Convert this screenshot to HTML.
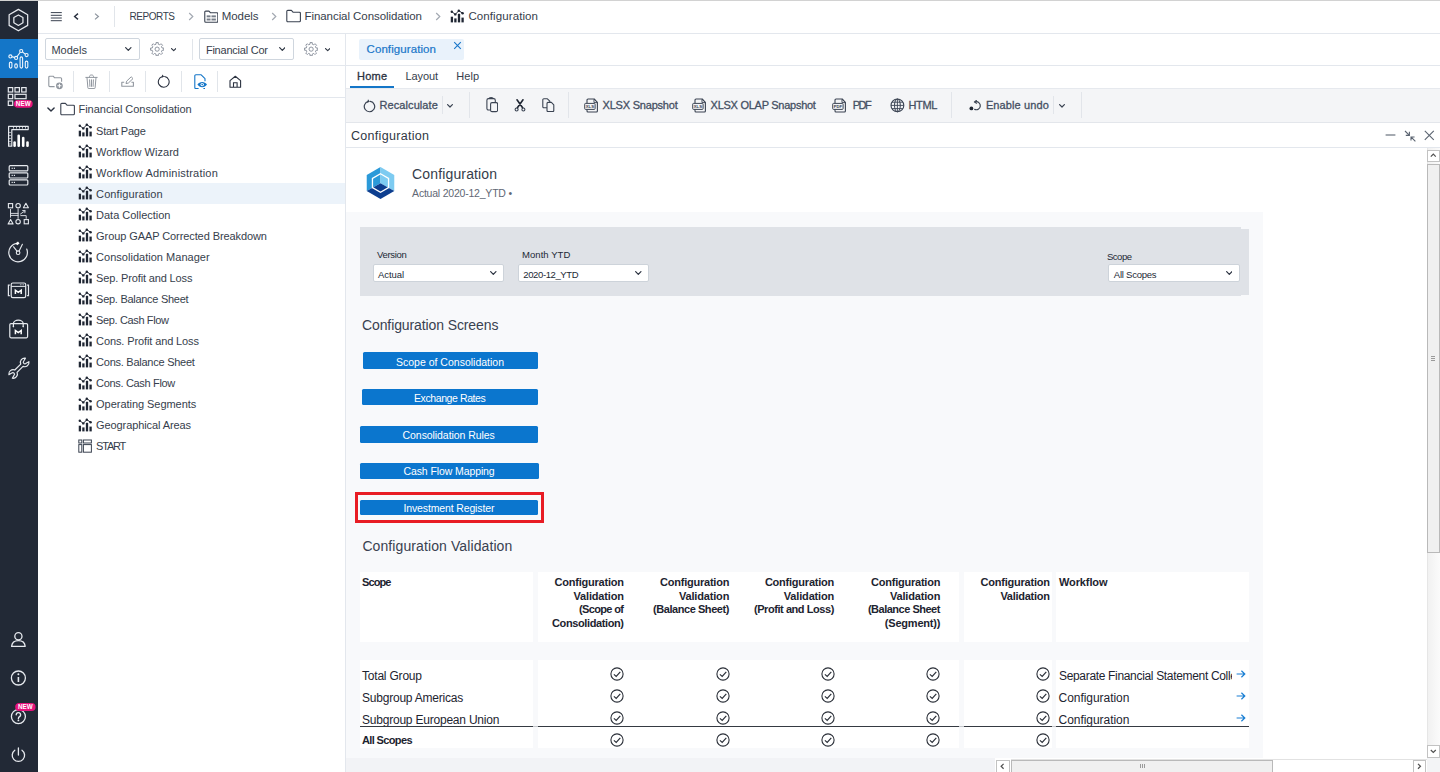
<!DOCTYPE html>
<html lang="en"><head><meta charset="utf-8"><title>Configuration - Financial Consolidation</title>
<style>
html,body{margin:0;padding:0;}
body{width:1440px;height:772px;overflow:hidden;background:#fff;position:relative;
 font-family:"Liberation Sans",sans-serif;}
.b{position:absolute;box-sizing:border-box;display:block;}
.t{position:absolute;white-space:nowrap;display:block;}
</style></head><body>
<div class="b" style="left:0px;top:0px;width:37.9px;height:772px;background:#222936;"></div>
<div class="b" style="left:0px;top:39.1px;width:38px;height:38.7px;background:#1476c8;"></div>
<svg class="b" style="left:0px;top:0px;" width="38" height="772" viewBox="0 0 38 772" fill="none"><polygon points="18.40,9.35 9.13,14.70 9.13,25.40 18.40,30.75 27.67,25.40 27.67,14.70" stroke="#e6e9ee" stroke-width="1.25" stroke-linejoin="round"/><polygon points="18.40,14.95 13.85,17.57 13.85,22.82 18.40,25.45 22.95,22.83 22.95,17.57" stroke="#e6e9ee" stroke-width="1.25" stroke-linejoin="round"/><rect x="9.4" y="62.1" width="2.5" height="6.0" rx="1.25" stroke="#eef5fc" stroke-width="1.1"/><rect x="14.8" y="63.9" width="2.5" height="4.2" rx="1.25" stroke="#eef5fc" stroke-width="1.1"/><rect x="20.1" y="56.9" width="2.5" height="11.2" rx="1.25" stroke="#eef5fc" stroke-width="1.1"/><rect x="25.3" y="61.1" width="2.5" height="7.0" rx="1.25" stroke="#eef5fc" stroke-width="1.1"/><polyline points="10.4,56.4 16.1,57.9 21.2,51.0 26.6,55.1" stroke="#eef5fc" stroke-width="1.1"/><circle cx="10.4" cy="56.4" r="1.55" fill="#1476c8" stroke="#eef5fc" stroke-width="1.1"/><circle cx="16.1" cy="57.9" r="1.55" fill="#1476c8" stroke="#eef5fc" stroke-width="1.1"/><circle cx="21.2" cy="51.0" r="1.55" fill="#1476c8" stroke="#eef5fc" stroke-width="1.1"/><circle cx="26.6" cy="55.1" r="1.55" fill="#1476c8" stroke="#eef5fc" stroke-width="1.1"/><rect x="8.3" y="87.6" width="4.4" height="4.4" stroke="#e6e9ee" stroke-width="1.2"/><rect x="15" y="87.6" width="4.4" height="4.4" stroke="#e6e9ee" stroke-width="1.2"/><rect x="21.7" y="87.6" width="4.4" height="4.4" stroke="#e6e9ee" stroke-width="1.2"/><rect x="8.3" y="94.3" width="4.4" height="4.4" stroke="#e6e9ee" stroke-width="1.2"/><rect x="15" y="94.3" width="11.1" height="4.4" stroke="#e6e9ee" stroke-width="1.2"/><rect x="8.3" y="101" width="4.4" height="4.4" stroke="#e6e9ee" stroke-width="1.2"/><rect x="13.9" y="99.9" width="18.8" height="7.9" rx="3.95" fill="#e6127c"/><text x="23.3" y="105.9" text-anchor="middle" font-family="Liberation Sans, sans-serif" font-size="6.3" font-weight="700" fill="#ffffff" letter-spacing="0.1">NEW</text><path d="M8.6 126.4h19.6v3.2h-16.4v16.6h-3.2z" stroke="#e6e9ee" stroke-width="1.2" stroke-linejoin="round"/><line x1="13.5" y1="127" x2="13.5" y2="128.6" stroke="#e6e9ee" stroke-width="0.8"/><line x1="16.5" y1="127" x2="16.5" y2="128.6" stroke="#e6e9ee" stroke-width="0.8"/><line x1="19.5" y1="127" x2="19.5" y2="128.6" stroke="#e6e9ee" stroke-width="0.8"/><line x1="22.5" y1="127" x2="22.5" y2="128.6" stroke="#e6e9ee" stroke-width="0.8"/><line x1="25.5" y1="127" x2="25.5" y2="128.6" stroke="#e6e9ee" stroke-width="0.8"/><line x1="9.2" y1="132.5" x2="10.8" y2="132.5" stroke="#e6e9ee" stroke-width="0.8"/><line x1="9.2" y1="135.5" x2="10.8" y2="135.5" stroke="#e6e9ee" stroke-width="0.8"/><line x1="9.2" y1="138.5" x2="10.8" y2="138.5" stroke="#e6e9ee" stroke-width="0.8"/><line x1="9.2" y1="141.5" x2="10.8" y2="141.5" stroke="#e6e9ee" stroke-width="0.8"/><line x1="9.2" y1="144" x2="10.8" y2="144" stroke="#e6e9ee" stroke-width="0.8"/><line x1="14.6" y1="142.6" x2="14.6" y2="145.8" stroke="#ffffff" stroke-width="2.6" stroke-linecap="round"/><line x1="18.7" y1="135.8" x2="18.7" y2="145.8" stroke="#ffffff" stroke-width="2.6" stroke-linecap="round"/><line x1="23.2" y1="138" x2="23.2" y2="145.8" stroke="#ffffff" stroke-width="2.6" stroke-linecap="round"/><line x1="27.5" y1="142.6" x2="27.5" y2="145.8" stroke="#ffffff" stroke-width="2.6" stroke-linecap="round"/><rect x="9.2" y="165.7" width="18.6" height="5.2" rx="1" stroke="#e6e9ee" stroke-width="1.2"/><rect x="11.6" y="167.7" width="1.2" height="1.2" fill="#e6e9ee"/><rect x="13.8" y="167.7" width="1.2" height="1.2" fill="#e6e9ee"/><rect x="9.2" y="172.8" width="18.6" height="5.2" rx="1" stroke="#e6e9ee" stroke-width="1.2"/><rect x="11.6" y="174.8" width="1.2" height="1.2" fill="#e6e9ee"/><rect x="13.8" y="174.8" width="1.2" height="1.2" fill="#e6e9ee"/><rect x="9.2" y="179.8" width="18.6" height="5.2" rx="1" stroke="#e6e9ee" stroke-width="1.2"/><rect x="11.6" y="181.8" width="1.2" height="1.2" fill="#e6e9ee"/><rect x="13.8" y="181.8" width="1.2" height="1.2" fill="#e6e9ee"/><rect x="8.4" y="203.6" width="4.2" height="4.2" stroke="#e6e9ee" stroke-width="1.1"/><circle cx="18.1" cy="205.7" r="2.2" stroke="#e6e9ee" stroke-width="1.1"/><path d="M25.9 203.3l2.5 4.5h-5z" stroke="#e6e9ee" stroke-width="1.1" stroke-linejoin="round"/><path d="M10.6 219.4l2.5 4.5h-5z" stroke="#e6e9ee" stroke-width="1.1" stroke-linejoin="round"/><circle cx="18.1" cy="221.7" r="2.2" stroke="#e6e9ee" stroke-width="1.1"/><rect x="24.2" y="219.6" width="4.2" height="4.2" stroke="#e6e9ee" stroke-width="1.1"/><path d="M10.5 209v8.6M18.1 208.8v10M10.5 213.4h8M10.5 215.4h8M20.2 214.2l4.6-3.2M22.2 210.6l3-0.2-0.4 2.8M20.4 215.6h5.8v3.2" stroke="#e6e9ee" stroke-width="0.9"/><path d="M26.72 249.02A9.3 9.3 0 1 1 16.97 243.27" stroke="#e6e9ee" stroke-width="1.2" stroke-linecap="round"/><path d="M15.6 243.4l2.4-1.9 1.5 2-2.3 1.8z" fill="#ffffff"/><circle cx="18.1" cy="252.7" r="1.8" stroke="#e6e9ee" stroke-width="1.1"/><path d="M17 251.2l-3.4-4.4M19.1 251.1l3.3-6.8" stroke="#e6e9ee" stroke-width="1.1" stroke-linecap="round"/><rect x="11.2" y="283" width="14.5" height="14.6" rx="1.6" stroke="#e6e9ee" stroke-width="1.2"/><line x1="11.2" y1="286.4" x2="25.7" y2="286.4" stroke="#e6e9ee" stroke-width="1"/><path d="M9.8 285.2h-1.4v10.4h1.4M27.1 285.2h1.4v10.4h-1.4" stroke="#e6e9ee" stroke-width="1.2"/><path d="M15.4 294v-3.8l2.9 2.1 2.9-2.1v3.8" stroke="#ffffff" stroke-width="1.5" stroke-linejoin="miter"/><circle cx="20.4" cy="284.7" r="0.5" fill="#e6e9ee"/><circle cx="22" cy="284.7" r="0.5" fill="#e6e9ee"/><circle cx="23.6" cy="284.7" r="0.5" fill="#e6e9ee"/><rect x="9.8" y="323.6" width="17.8" height="14.2" rx="1.2" stroke="#e6e9ee" stroke-width="1.2"/><path d="M13.4 326.4v-2.6a4.9 3.6 0 0 1 9.8 0v2.6" stroke="#e6e9ee" stroke-width="1.2"/><circle cx="13.4" cy="326.6" r="0.8" fill="#e6e9ee"/><circle cx="23.2" cy="326.6" r="0.8" fill="#e6e9ee"/><path d="M15.4 334.2v-3.8l2.9 2.1 2.9-2.1v3.8" stroke="#ffffff" stroke-width="1.5"/><g transform="translate(18.9 368.2) rotate(-45)"><path d="M11.72 -2.47A4.3 4.3 0 0 0 4.21 -1.6L-4.21 -1.6A4.3 4.3 0 0 0 -11.72 -2.47L-8.50 -1.6A1.6 1.6 0 0 1 -8.50 1.6L-11.72 2.47A4.3 4.3 0 0 0 -4.21 1.6L4.21 1.6A4.3 4.3 0 0 0 11.72 2.47L8.50 1.6A1.6 1.6 0 0 1 8.50 -1.6Z" stroke="#e6e9ee" stroke-width="1.2" stroke-linejoin="round"/></g><circle cx="18.4" cy="636.2" r="3.6" stroke="#e6e9ee" stroke-width="1.3"/><path d="M11.6 646.4c0.4-4 3.2-5.8 6.8-5.8s6.4 1.8 6.8 5.8z" stroke="#e6e9ee" stroke-width="1.3" stroke-linejoin="round"/><circle cx="18.4" cy="678" r="7" stroke="#e6e9ee" stroke-width="1.3"/><line x1="18.4" y1="677" x2="18.4" y2="682" stroke="#e6e9ee" stroke-width="1.6"/><circle cx="18.4" cy="674.3" r="1" fill="#e6e9ee"/><circle cx="18.4" cy="716.6" r="7" stroke="#e6e9ee" stroke-width="1.3"/><path d="M16.2 714.8a2.2 2.2 0 1 1 3.4 1.9c-0.8 0.5-1.2 0.9-1.2 1.8" stroke="#e6e9ee" stroke-width="1.4" stroke-linecap="round"/><circle cx="18.4" cy="720.4" r="0.9" fill="#e6e9ee"/><rect x="15.2" y="702.9" width="20.4" height="8.2" rx="4.1" fill="#e6127c"/><text x="25.4" y="709.2" text-anchor="middle" font-family="Liberation Sans, sans-serif" font-size="6.3" font-weight="700" fill="#ffffff" letter-spacing="0.1">NEW</text><path d="M22 750.2a6.2 6.2 0 1 1 -7.2 0" stroke="#e6e9ee" stroke-width="1.3" stroke-linecap="round"/><line x1="18.4" y1="748" x2="18.4" y2="755" stroke="#e6e9ee" stroke-width="1.3" stroke-linecap="round"/></svg>
<div class="b" style="left:38px;top:32.5px;width:1402px;height:1px;background:#e3e7ed;"></div>
<svg class="b" style="left:50px;top:11px;" width="13" height="11" viewBox="0 0 13 11" fill="none"><path d="M0.8 1.6h11M0.8 4.3h11M0.8 7h11M0.8 9.7h11" stroke="#3a4250" stroke-width="1"/></svg>
<svg class="b" style="left:73px;top:12px;" width="7" height="9" viewBox="0 0 7 9" fill="none"><polyline points="5,1.6 1.6,4.5 5,7.4" stroke="#2b3240" stroke-width="1.4"/></svg>
<svg class="b" style="left:93px;top:12px;" width="7" height="9" viewBox="0 0 7 9" fill="none"><polyline points="2,1.6 5.4,4.5 2,7.4" stroke="#8d949e" stroke-width="1.2"/></svg>
<div class="b" style="left:114px;top:6px;width:1px;height:21px;background:#e1e5ea;"></div>
<span class="t " style="left:129.50px;top:11.74px;font-size:10px;line-height:10px;color:#363e4c;letter-spacing:-0.443px;">REPORTS</span>
<svg class="b" style="left:187.5px;top:12px;" width="6" height="9" viewBox="0 0 6 9" fill="none"><polyline points="1.2,1 4.8,4.5 1.2,8" stroke="#a3a9b2" stroke-width="1.2"/></svg>
<svg class="b" style="left:203.8px;top:10px;" width="14.4" height="12.5" viewBox="0 0 15 13" fill="none"><path d="M0.8 2.2a1 1 0 0 1 1-1h3.4l1.4 1.6h6.8a1 1 0 0 1 1 1v8a1 1 0 0 1-1 1h-11.6a1 1 0 0 1-1-1z" stroke="#3a4250" stroke-width="1.15" stroke-linejoin="round"/><rect x="2.8" y="5.6" width="4" height="2" fill="#767d88"/><rect x="7.8" y="5.6" width="4.6" height="2" fill="#767d88"/><rect x="2.8" y="8.9" width="4" height="2" fill="#767d88"/><rect x="7.8" y="8.9" width="4.6" height="2" fill="#767d88"/></svg>
<span class="t " style="left:221.80px;top:11.27px;font-size:11.5px;line-height:11.5px;color:#363e4c;letter-spacing:-0.095px;">Models</span>
<svg class="b" style="left:270.5px;top:12px;" width="6" height="9" viewBox="0 0 6 9" fill="none"><polyline points="1.2,1 4.8,4.5 1.2,8" stroke="#a3a9b2" stroke-width="1.2"/></svg>
<svg class="b" style="left:285.6px;top:9.4px;" width="15" height="14" viewBox="0 0 15 14" fill="none"><path d="M0.8 2.4a1 1 0 0 1 1-1h3.6l1.6 1.8h6.4a1 1 0 0 1 1 1v7.6a1 1 0 0 1-1 1h-11.6a1 1 0 0 1-1-1z" stroke="#3a4250" stroke-width="1.1" stroke-linejoin="round"/></svg>
<span class="t " style="left:304.50px;top:11.27px;font-size:11.5px;line-height:11.5px;color:#363e4c;letter-spacing:-0.064px;">Financial Consolidation</span>
<svg class="b" style="left:435px;top:12px;" width="6" height="9" viewBox="0 0 6 9" fill="none"><polyline points="1.2,1 4.8,4.5 1.2,8" stroke="#a3a9b2" stroke-width="1.2"/></svg>
<svg class="b" style="left:450.4px;top:9px;" width="14" height="14" viewBox="0 0 14 14" fill="none"><line x1="1.9" y1="7.7" x2="1.9" y2="13.4" stroke="#1f2633" stroke-width="2.3"/><line x1="5.4" y1="9.4" x2="5.4" y2="13.4" stroke="#1f2633" stroke-width="2.3"/><line x1="9.0" y1="4.8" x2="9.0" y2="13.4" stroke="#1f2633" stroke-width="2.3"/><line x1="12.6" y1="8.6" x2="12.6" y2="13.4" stroke="#1f2633" stroke-width="2.3"/><polyline points="1.8,2.7 5.3,5.4 8.8,1.7 12.6,4.2" stroke="#1f2633" stroke-width="1"/><circle cx="1.8" cy="2.7" r="1.2" fill="#1f2633"/><circle cx="5.3" cy="5.4" r="1.2" fill="#1f2633"/><circle cx="8.8" cy="1.7" r="1.2" fill="#1f2633"/><circle cx="12.6" cy="4.2" r="1.2" fill="#1f2633"/></svg>
<span class="t " style="left:468.40px;top:11.27px;font-size:11.5px;line-height:11.5px;color:#363e4c;letter-spacing:0.099px;">Configuration</span>
<div class="b" style="left:345px;top:33px;width:1px;height:739px;background:#e3e7ed;"></div>
<div class="b" style="left:38px;top:65px;width:308px;height:1px;background:#e3e7ed;"></div>
<div class="b" style="left:38px;top:97px;width:308px;height:1px;background:#e3e7ed;"></div>
<div class="b" style="left:45px;top:38.4px;width:95px;height:21.4px;background:#fff;border:1px solid #cfd6de;border-radius:2px;"></div>
<span class="t " style="left:51.40px;top:44.59px;font-size:11px;line-height:11px;color:#363e4c;letter-spacing:0.028px;">Models</span>
<svg class="b" style="left:125.4px;top:47.2px;" width="6.6" height="4.2" viewBox="0 0 7 4.4" fill="none"><polyline points="0.7,0.7 3.5,3.5 6.3,0.7" stroke="#2f3744" stroke-width="1.3" stroke-linecap="round" stroke-linejoin="round"/></svg>
<svg class="b" style="left:150px;top:41.9px;" width="14.3" height="14.3" viewBox="0 0 15 15" fill="none"><polygon points="6.32,0.60 8.68,0.60 8.68,2.33 10.32,3.01 11.54,1.78 13.22,3.46 11.99,4.68 12.67,6.32 14.40,6.32 14.40,8.68 12.67,8.68 11.99,10.32 13.22,11.54 11.54,13.22 10.32,11.99 8.68,12.67 8.68,14.40 6.32,14.40 6.32,12.67 4.68,11.99 3.46,13.22 1.78,11.54 3.01,10.32 2.33,8.68 0.60,8.68 0.60,6.32 2.33,6.32 3.01,4.68 1.78,3.46 3.46,1.78 4.68,3.01 6.32,2.33" stroke="#8a919c" stroke-width="1" stroke-linejoin="round"/><circle cx="7.5" cy="7.5" r="2.2" stroke="#8a919c" stroke-width="1"/></svg>
<svg class="b" style="left:171px;top:48.4px;" width="5.4" height="3.4" viewBox="0 0 7 4.4" fill="none"><polyline points="0.7,0.7 3.5,3.5 6.3,0.7" stroke="#2f3744" stroke-width="1.5" stroke-linecap="round" stroke-linejoin="round"/></svg>
<div class="b" style="left:192px;top:39px;width:1px;height:21px;background:#e1e5ea;"></div>
<div class="b" style="left:199.4px;top:38.4px;width:94.2px;height:21.4px;background:#fff;border:1px solid #cfd6de;border-radius:2px;"></div>
<span class="t " style="left:205.90px;top:44.59px;font-size:11px;line-height:11px;color:#363e4c;letter-spacing:-0.225px;">Financial Cor</span>
<svg class="b" style="left:278.8px;top:47.2px;" width="6.6" height="4.2" viewBox="0 0 7 4.4" fill="none"><polyline points="0.7,0.7 3.5,3.5 6.3,0.7" stroke="#2f3744" stroke-width="1.3" stroke-linecap="round" stroke-linejoin="round"/></svg>
<svg class="b" style="left:303.6px;top:41.9px;" width="14.3" height="14.3" viewBox="0 0 15 15" fill="none"><polygon points="6.32,0.60 8.68,0.60 8.68,2.33 10.32,3.01 11.54,1.78 13.22,3.46 11.99,4.68 12.67,6.32 14.40,6.32 14.40,8.68 12.67,8.68 11.99,10.32 13.22,11.54 11.54,13.22 10.32,11.99 8.68,12.67 8.68,14.40 6.32,14.40 6.32,12.67 4.68,11.99 3.46,13.22 1.78,11.54 3.01,10.32 2.33,8.68 0.60,8.68 0.60,6.32 2.33,6.32 3.01,4.68 1.78,3.46 3.46,1.78 4.68,3.01 6.32,2.33" stroke="#8a919c" stroke-width="1" stroke-linejoin="round"/><circle cx="7.5" cy="7.5" r="2.2" stroke="#8a919c" stroke-width="1"/></svg>
<svg class="b" style="left:324.8px;top:48.4px;" width="5.4" height="3.4" viewBox="0 0 7 4.4" fill="none"><polyline points="0.7,0.7 3.5,3.5 6.3,0.7" stroke="#2f3744" stroke-width="1.5" stroke-linecap="round" stroke-linejoin="round"/></svg>
<div class="b" style="left:72.9px;top:71px;width:1px;height:21px;background:#e1e5ea;"></div>
<div class="b" style="left:108.9px;top:71px;width:1px;height:21px;background:#e1e5ea;"></div>
<div class="b" style="left:144.8px;top:71px;width:1px;height:21px;background:#e1e5ea;"></div>
<div class="b" style="left:180.8px;top:71px;width:1px;height:21px;background:#e1e5ea;"></div>
<div class="b" style="left:217.1px;top:71px;width:1px;height:21px;background:#e1e5ea;"></div>
<svg class="b" style="left:47.6px;top:74.6px;" width="16" height="15" viewBox="0 0 16 15" fill="none"><path d="M6.6 11.6h-4.8a1 1 0 0 1-1-1v-8.4a1 1 0 0 1 1-1h3.4l1.4 1.6h6a1 1 0 0 1 1 1v3" stroke="#91979f" stroke-width="1.1" stroke-linejoin="round"/><circle cx="11.4" cy="10.8" r="3.4" fill="#91979f"/><path d="M11.4 8.8v4M9.4 10.8h4" stroke="#fff" stroke-width="1.1"/></svg>
<svg class="b" style="left:85px;top:74px;" width="13" height="15.4" viewBox="0 0 13 15.4" fill="none"><path d="M0.8 3.4h11.4M4.4 3.2c0-1.6 0.6-2.2 2.1-2.2s2.1 0.6 2.1 2.2M2 3.6l0.9 10.2a0.8 0.8 0 0 0 0.8 0.8h5.6a0.8 0.8 0 0 0 0.8-0.8l0.9-10.2M4.6 5.8l0.3 6.6M6.5 5.8v6.6M8.4 5.8l-0.3 6.6" stroke="#91979f" stroke-width="1" stroke-linecap="round"/></svg>
<svg class="b" style="left:120.8px;top:76.4px;" width="14" height="11" viewBox="0 0 14 11" fill="none"><path d="M3.2 6.2h-2.4v4h11.6v-4h-2" stroke="#91979f" stroke-width="1.1" stroke-linejoin="round"/><path d="M5 7.6l0.6-2.4 4.6-4.4 1.8 1.8-4.6 4.4z" stroke="#91979f" stroke-width="1" stroke-linejoin="round"/></svg>
<svg class="b" style="left:156.8px;top:73.8px;" width="13.6" height="14.4" viewBox="0 0 13.6 14.4" fill="none"><path d="M7.6 2.5a5.4 5.4 0 1 1 -2 0.05" stroke="#2b3240" stroke-width="1.1" stroke-linecap="round"/><path d="M4.8 0.8l2.4 1.6-2.2 1.8" fill="#2b3240" transform="rotate(20 6 2.4)"/></svg>
<svg class="b" style="left:193.8px;top:73.6px;" width="13.6" height="15.6" viewBox="0 0 13.6 15.6" fill="none"><path d="M4.6 14.6h-2.8a1 1 0 0 1-1-1v-11.8a1 1 0 0 1 1-1h5.4l3.8 3.8v2.6M9.4 14.6h1.6" stroke="#1476c8" stroke-width="1.1" stroke-linejoin="round"/><path d="M3.4 10.6c2-3.4 7.6-3.4 9.6 0c-2 3.4-7.6 3.4-9.6 0z" fill="#1476c8"/><circle cx="8.2" cy="10.6" r="1.7" fill="#fff"/><circle cx="8.2" cy="10.6" r="0.8" fill="#1476c8"/></svg>
<svg class="b" style="left:229.4px;top:75.4px;" width="12.6" height="13" viewBox="0 0 12.6 13" fill="none"><path d="M1 5.6l5.3-4.4 5.3 4.4v6.6h-10.6z" stroke="#2b3240" stroke-width="1.1" stroke-linejoin="round"/><path d="M4.5 12v-4.2h3.6v4.2" stroke="#2b3240" stroke-width="1.1"/></svg>
<div class="b" style="left:38px;top:183px;width:307px;height:21px;background:#ecf3fa;"></div>
<svg class="b" style="left:47px;top:106.6px;" width="8" height="5.2" viewBox="0 0 8 5.2" fill="none"><polyline points="0.9,0.9 4,4 7.1,0.9" stroke="#2b3240" stroke-width="1.4" stroke-linecap="round" stroke-linejoin="round"/></svg>
<svg class="b" style="left:60px;top:102.2px;" width="15" height="14" viewBox="0 0 15 14" fill="none"><path d="M0.8 2.4a1 1 0 0 1 1-1h3.6l1.6 1.8h6.4a1 1 0 0 1 1 1v7.6a1 1 0 0 1-1 1h-11.6a1 1 0 0 1-1-1z" stroke="#3a4250" stroke-width="1.1" stroke-linejoin="round"/></svg>
<span class="t " style="left:78.50px;top:104.49px;font-size:11px;line-height:11px;color:#363e4c;letter-spacing:-0.024px;">Financial Consolidation</span>
<svg class="b" style="left:78px;top:122.8px;" width="14" height="14" viewBox="0 0 14 14" fill="none"><line x1="1.9" y1="7.7" x2="1.9" y2="13.4" stroke="#1f2633" stroke-width="2.3"/><line x1="5.4" y1="9.4" x2="5.4" y2="13.4" stroke="#1f2633" stroke-width="2.3"/><line x1="9.0" y1="4.8" x2="9.0" y2="13.4" stroke="#1f2633" stroke-width="2.3"/><line x1="12.6" y1="8.6" x2="12.6" y2="13.4" stroke="#1f2633" stroke-width="2.3"/><polyline points="1.8,2.7 5.3,5.4 8.8,1.7 12.6,4.2" stroke="#1f2633" stroke-width="1"/><circle cx="1.8" cy="2.7" r="1.2" fill="#1f2633"/><circle cx="5.3" cy="5.4" r="1.2" fill="#1f2633"/><circle cx="8.8" cy="1.7" r="1.2" fill="#1f2633"/><circle cx="12.6" cy="4.2" r="1.2" fill="#1f2633"/></svg>
<span class="t " style="left:96.10px;top:125.55px;font-size:11px;line-height:11px;color:#363e4c;letter-spacing:-0.253px;">Start Page</span>
<svg class="b" style="left:78px;top:143.8px;" width="14" height="14" viewBox="0 0 14 14" fill="none"><line x1="1.9" y1="7.7" x2="1.9" y2="13.4" stroke="#1f2633" stroke-width="2.3"/><line x1="5.4" y1="9.4" x2="5.4" y2="13.4" stroke="#1f2633" stroke-width="2.3"/><line x1="9.0" y1="4.8" x2="9.0" y2="13.4" stroke="#1f2633" stroke-width="2.3"/><line x1="12.6" y1="8.6" x2="12.6" y2="13.4" stroke="#1f2633" stroke-width="2.3"/><polyline points="1.8,2.7 5.3,5.4 8.8,1.7 12.6,4.2" stroke="#1f2633" stroke-width="1"/><circle cx="1.8" cy="2.7" r="1.2" fill="#1f2633"/><circle cx="5.3" cy="5.4" r="1.2" fill="#1f2633"/><circle cx="8.8" cy="1.7" r="1.2" fill="#1f2633"/><circle cx="12.6" cy="4.2" r="1.2" fill="#1f2633"/></svg>
<span class="t " style="left:96.10px;top:146.61px;font-size:11px;line-height:11px;color:#363e4c;letter-spacing:0.042px;">Workflow Wizard</span>
<svg class="b" style="left:78px;top:164.9px;" width="14" height="14" viewBox="0 0 14 14" fill="none"><line x1="1.9" y1="7.7" x2="1.9" y2="13.4" stroke="#1f2633" stroke-width="2.3"/><line x1="5.4" y1="9.4" x2="5.4" y2="13.4" stroke="#1f2633" stroke-width="2.3"/><line x1="9.0" y1="4.8" x2="9.0" y2="13.4" stroke="#1f2633" stroke-width="2.3"/><line x1="12.6" y1="8.6" x2="12.6" y2="13.4" stroke="#1f2633" stroke-width="2.3"/><polyline points="1.8,2.7 5.3,5.4 8.8,1.7 12.6,4.2" stroke="#1f2633" stroke-width="1"/><circle cx="1.8" cy="2.7" r="1.2" fill="#1f2633"/><circle cx="5.3" cy="5.4" r="1.2" fill="#1f2633"/><circle cx="8.8" cy="1.7" r="1.2" fill="#1f2633"/><circle cx="12.6" cy="4.2" r="1.2" fill="#1f2633"/></svg>
<span class="t " style="left:96.10px;top:167.67px;font-size:11px;line-height:11px;color:#363e4c;letter-spacing:0.206px;">Workflow Administration</span>
<svg class="b" style="left:78px;top:185.9px;" width="14" height="14" viewBox="0 0 14 14" fill="none"><line x1="1.9" y1="7.7" x2="1.9" y2="13.4" stroke="#1f2633" stroke-width="2.3"/><line x1="5.4" y1="9.4" x2="5.4" y2="13.4" stroke="#1f2633" stroke-width="2.3"/><line x1="9.0" y1="4.8" x2="9.0" y2="13.4" stroke="#1f2633" stroke-width="2.3"/><line x1="12.6" y1="8.6" x2="12.6" y2="13.4" stroke="#1f2633" stroke-width="2.3"/><polyline points="1.8,2.7 5.3,5.4 8.8,1.7 12.6,4.2" stroke="#1f2633" stroke-width="1"/><circle cx="1.8" cy="2.7" r="1.2" fill="#1f2633"/><circle cx="5.3" cy="5.4" r="1.2" fill="#1f2633"/><circle cx="8.8" cy="1.7" r="1.2" fill="#1f2633"/><circle cx="12.6" cy="4.2" r="1.2" fill="#1f2633"/></svg>
<span class="t " style="left:96.10px;top:188.73px;font-size:11px;line-height:11px;color:#363e4c;letter-spacing:0.097px;">Configuration</span>
<svg class="b" style="left:78px;top:207.0px;" width="14" height="14" viewBox="0 0 14 14" fill="none"><line x1="1.9" y1="7.7" x2="1.9" y2="13.4" stroke="#1f2633" stroke-width="2.3"/><line x1="5.4" y1="9.4" x2="5.4" y2="13.4" stroke="#1f2633" stroke-width="2.3"/><line x1="9.0" y1="4.8" x2="9.0" y2="13.4" stroke="#1f2633" stroke-width="2.3"/><line x1="12.6" y1="8.6" x2="12.6" y2="13.4" stroke="#1f2633" stroke-width="2.3"/><polyline points="1.8,2.7 5.3,5.4 8.8,1.7 12.6,4.2" stroke="#1f2633" stroke-width="1"/><circle cx="1.8" cy="2.7" r="1.2" fill="#1f2633"/><circle cx="5.3" cy="5.4" r="1.2" fill="#1f2633"/><circle cx="8.8" cy="1.7" r="1.2" fill="#1f2633"/><circle cx="12.6" cy="4.2" r="1.2" fill="#1f2633"/></svg>
<span class="t " style="left:96.10px;top:209.79px;font-size:11px;line-height:11px;color:#363e4c;letter-spacing:-0.021px;">Data Collection</span>
<svg class="b" style="left:78px;top:228.1px;" width="14" height="14" viewBox="0 0 14 14" fill="none"><line x1="1.9" y1="7.7" x2="1.9" y2="13.4" stroke="#1f2633" stroke-width="2.3"/><line x1="5.4" y1="9.4" x2="5.4" y2="13.4" stroke="#1f2633" stroke-width="2.3"/><line x1="9.0" y1="4.8" x2="9.0" y2="13.4" stroke="#1f2633" stroke-width="2.3"/><line x1="12.6" y1="8.6" x2="12.6" y2="13.4" stroke="#1f2633" stroke-width="2.3"/><polyline points="1.8,2.7 5.3,5.4 8.8,1.7 12.6,4.2" stroke="#1f2633" stroke-width="1"/><circle cx="1.8" cy="2.7" r="1.2" fill="#1f2633"/><circle cx="5.3" cy="5.4" r="1.2" fill="#1f2633"/><circle cx="8.8" cy="1.7" r="1.2" fill="#1f2633"/><circle cx="12.6" cy="4.2" r="1.2" fill="#1f2633"/></svg>
<span class="t " style="left:96.10px;top:230.85px;font-size:11px;line-height:11px;color:#363e4c;letter-spacing:-0.088px;">Group GAAP Corrected Breakdown</span>
<svg class="b" style="left:78px;top:249.1px;" width="14" height="14" viewBox="0 0 14 14" fill="none"><line x1="1.9" y1="7.7" x2="1.9" y2="13.4" stroke="#1f2633" stroke-width="2.3"/><line x1="5.4" y1="9.4" x2="5.4" y2="13.4" stroke="#1f2633" stroke-width="2.3"/><line x1="9.0" y1="4.8" x2="9.0" y2="13.4" stroke="#1f2633" stroke-width="2.3"/><line x1="12.6" y1="8.6" x2="12.6" y2="13.4" stroke="#1f2633" stroke-width="2.3"/><polyline points="1.8,2.7 5.3,5.4 8.8,1.7 12.6,4.2" stroke="#1f2633" stroke-width="1"/><circle cx="1.8" cy="2.7" r="1.2" fill="#1f2633"/><circle cx="5.3" cy="5.4" r="1.2" fill="#1f2633"/><circle cx="8.8" cy="1.7" r="1.2" fill="#1f2633"/><circle cx="12.6" cy="4.2" r="1.2" fill="#1f2633"/></svg>
<span class="t " style="left:96.10px;top:251.91px;font-size:11px;line-height:11px;color:#363e4c;letter-spacing:0.019px;">Consolidation Manager</span>
<svg class="b" style="left:78px;top:270.2px;" width="14" height="14" viewBox="0 0 14 14" fill="none"><line x1="1.9" y1="7.7" x2="1.9" y2="13.4" stroke="#1f2633" stroke-width="2.3"/><line x1="5.4" y1="9.4" x2="5.4" y2="13.4" stroke="#1f2633" stroke-width="2.3"/><line x1="9.0" y1="4.8" x2="9.0" y2="13.4" stroke="#1f2633" stroke-width="2.3"/><line x1="12.6" y1="8.6" x2="12.6" y2="13.4" stroke="#1f2633" stroke-width="2.3"/><polyline points="1.8,2.7 5.3,5.4 8.8,1.7 12.6,4.2" stroke="#1f2633" stroke-width="1"/><circle cx="1.8" cy="2.7" r="1.2" fill="#1f2633"/><circle cx="5.3" cy="5.4" r="1.2" fill="#1f2633"/><circle cx="8.8" cy="1.7" r="1.2" fill="#1f2633"/><circle cx="12.6" cy="4.2" r="1.2" fill="#1f2633"/></svg>
<span class="t " style="left:96.10px;top:272.97px;font-size:11px;line-height:11px;color:#363e4c;letter-spacing:-0.145px;">Sep. Profit and Loss</span>
<svg class="b" style="left:78px;top:291.2px;" width="14" height="14" viewBox="0 0 14 14" fill="none"><line x1="1.9" y1="7.7" x2="1.9" y2="13.4" stroke="#1f2633" stroke-width="2.3"/><line x1="5.4" y1="9.4" x2="5.4" y2="13.4" stroke="#1f2633" stroke-width="2.3"/><line x1="9.0" y1="4.8" x2="9.0" y2="13.4" stroke="#1f2633" stroke-width="2.3"/><line x1="12.6" y1="8.6" x2="12.6" y2="13.4" stroke="#1f2633" stroke-width="2.3"/><polyline points="1.8,2.7 5.3,5.4 8.8,1.7 12.6,4.2" stroke="#1f2633" stroke-width="1"/><circle cx="1.8" cy="2.7" r="1.2" fill="#1f2633"/><circle cx="5.3" cy="5.4" r="1.2" fill="#1f2633"/><circle cx="8.8" cy="1.7" r="1.2" fill="#1f2633"/><circle cx="12.6" cy="4.2" r="1.2" fill="#1f2633"/></svg>
<span class="t " style="left:96.10px;top:294.03px;font-size:11px;line-height:11px;color:#363e4c;letter-spacing:-0.279px;">Sep. Balance Sheet</span>
<svg class="b" style="left:78px;top:312.3px;" width="14" height="14" viewBox="0 0 14 14" fill="none"><line x1="1.9" y1="7.7" x2="1.9" y2="13.4" stroke="#1f2633" stroke-width="2.3"/><line x1="5.4" y1="9.4" x2="5.4" y2="13.4" stroke="#1f2633" stroke-width="2.3"/><line x1="9.0" y1="4.8" x2="9.0" y2="13.4" stroke="#1f2633" stroke-width="2.3"/><line x1="12.6" y1="8.6" x2="12.6" y2="13.4" stroke="#1f2633" stroke-width="2.3"/><polyline points="1.8,2.7 5.3,5.4 8.8,1.7 12.6,4.2" stroke="#1f2633" stroke-width="1"/><circle cx="1.8" cy="2.7" r="1.2" fill="#1f2633"/><circle cx="5.3" cy="5.4" r="1.2" fill="#1f2633"/><circle cx="8.8" cy="1.7" r="1.2" fill="#1f2633"/><circle cx="12.6" cy="4.2" r="1.2" fill="#1f2633"/></svg>
<span class="t " style="left:96.10px;top:315.09px;font-size:11px;line-height:11px;color:#363e4c;letter-spacing:-0.365px;">Sep. Cash Flow</span>
<svg class="b" style="left:78px;top:333.4px;" width="14" height="14" viewBox="0 0 14 14" fill="none"><line x1="1.9" y1="7.7" x2="1.9" y2="13.4" stroke="#1f2633" stroke-width="2.3"/><line x1="5.4" y1="9.4" x2="5.4" y2="13.4" stroke="#1f2633" stroke-width="2.3"/><line x1="9.0" y1="4.8" x2="9.0" y2="13.4" stroke="#1f2633" stroke-width="2.3"/><line x1="12.6" y1="8.6" x2="12.6" y2="13.4" stroke="#1f2633" stroke-width="2.3"/><polyline points="1.8,2.7 5.3,5.4 8.8,1.7 12.6,4.2" stroke="#1f2633" stroke-width="1"/><circle cx="1.8" cy="2.7" r="1.2" fill="#1f2633"/><circle cx="5.3" cy="5.4" r="1.2" fill="#1f2633"/><circle cx="8.8" cy="1.7" r="1.2" fill="#1f2633"/><circle cx="12.6" cy="4.2" r="1.2" fill="#1f2633"/></svg>
<span class="t " style="left:96.10px;top:336.15px;font-size:11px;line-height:11px;color:#363e4c;letter-spacing:-0.113px;">Cons. Profit and Loss</span>
<svg class="b" style="left:78px;top:354.4px;" width="14" height="14" viewBox="0 0 14 14" fill="none"><line x1="1.9" y1="7.7" x2="1.9" y2="13.4" stroke="#1f2633" stroke-width="2.3"/><line x1="5.4" y1="9.4" x2="5.4" y2="13.4" stroke="#1f2633" stroke-width="2.3"/><line x1="9.0" y1="4.8" x2="9.0" y2="13.4" stroke="#1f2633" stroke-width="2.3"/><line x1="12.6" y1="8.6" x2="12.6" y2="13.4" stroke="#1f2633" stroke-width="2.3"/><polyline points="1.8,2.7 5.3,5.4 8.8,1.7 12.6,4.2" stroke="#1f2633" stroke-width="1"/><circle cx="1.8" cy="2.7" r="1.2" fill="#1f2633"/><circle cx="5.3" cy="5.4" r="1.2" fill="#1f2633"/><circle cx="8.8" cy="1.7" r="1.2" fill="#1f2633"/><circle cx="12.6" cy="4.2" r="1.2" fill="#1f2633"/></svg>
<span class="t " style="left:96.10px;top:357.21px;font-size:11px;line-height:11px;color:#363e4c;letter-spacing:-0.253px;">Cons. Balance Sheet</span>
<svg class="b" style="left:78px;top:375.5px;" width="14" height="14" viewBox="0 0 14 14" fill="none"><line x1="1.9" y1="7.7" x2="1.9" y2="13.4" stroke="#1f2633" stroke-width="2.3"/><line x1="5.4" y1="9.4" x2="5.4" y2="13.4" stroke="#1f2633" stroke-width="2.3"/><line x1="9.0" y1="4.8" x2="9.0" y2="13.4" stroke="#1f2633" stroke-width="2.3"/><line x1="12.6" y1="8.6" x2="12.6" y2="13.4" stroke="#1f2633" stroke-width="2.3"/><polyline points="1.8,2.7 5.3,5.4 8.8,1.7 12.6,4.2" stroke="#1f2633" stroke-width="1"/><circle cx="1.8" cy="2.7" r="1.2" fill="#1f2633"/><circle cx="5.3" cy="5.4" r="1.2" fill="#1f2633"/><circle cx="8.8" cy="1.7" r="1.2" fill="#1f2633"/><circle cx="12.6" cy="4.2" r="1.2" fill="#1f2633"/></svg>
<span class="t " style="left:96.10px;top:378.27px;font-size:11px;line-height:11px;color:#363e4c;letter-spacing:-0.325px;">Cons. Cash Flow</span>
<svg class="b" style="left:78px;top:396.5px;" width="14" height="14" viewBox="0 0 14 14" fill="none"><line x1="1.9" y1="7.7" x2="1.9" y2="13.4" stroke="#1f2633" stroke-width="2.3"/><line x1="5.4" y1="9.4" x2="5.4" y2="13.4" stroke="#1f2633" stroke-width="2.3"/><line x1="9.0" y1="4.8" x2="9.0" y2="13.4" stroke="#1f2633" stroke-width="2.3"/><line x1="12.6" y1="8.6" x2="12.6" y2="13.4" stroke="#1f2633" stroke-width="2.3"/><polyline points="1.8,2.7 5.3,5.4 8.8,1.7 12.6,4.2" stroke="#1f2633" stroke-width="1"/><circle cx="1.8" cy="2.7" r="1.2" fill="#1f2633"/><circle cx="5.3" cy="5.4" r="1.2" fill="#1f2633"/><circle cx="8.8" cy="1.7" r="1.2" fill="#1f2633"/><circle cx="12.6" cy="4.2" r="1.2" fill="#1f2633"/></svg>
<span class="t " style="left:96.10px;top:399.33px;font-size:11px;line-height:11px;color:#363e4c;letter-spacing:-0.041px;">Operating Segments</span>
<svg class="b" style="left:78px;top:417.6px;" width="14" height="14" viewBox="0 0 14 14" fill="none"><line x1="1.9" y1="7.7" x2="1.9" y2="13.4" stroke="#1f2633" stroke-width="2.3"/><line x1="5.4" y1="9.4" x2="5.4" y2="13.4" stroke="#1f2633" stroke-width="2.3"/><line x1="9.0" y1="4.8" x2="9.0" y2="13.4" stroke="#1f2633" stroke-width="2.3"/><line x1="12.6" y1="8.6" x2="12.6" y2="13.4" stroke="#1f2633" stroke-width="2.3"/><polyline points="1.8,2.7 5.3,5.4 8.8,1.7 12.6,4.2" stroke="#1f2633" stroke-width="1"/><circle cx="1.8" cy="2.7" r="1.2" fill="#1f2633"/><circle cx="5.3" cy="5.4" r="1.2" fill="#1f2633"/><circle cx="8.8" cy="1.7" r="1.2" fill="#1f2633"/><circle cx="12.6" cy="4.2" r="1.2" fill="#1f2633"/></svg>
<span class="t " style="left:96.10px;top:420.39px;font-size:11px;line-height:11px;color:#363e4c;letter-spacing:-0.101px;">Geographical Areas</span>
<svg class="b" style="left:78px;top:438.5px;" width="14.4" height="14.2" viewBox="0 0 14.4 14.2" fill="none"><rect x="0.8" y="1" width="3" height="3" stroke="#3a4250" stroke-width="1"/><rect x="5.4" y="1" width="8" height="3" stroke="#3a4250" stroke-width="1"/><rect x="0.8" y="5.6" width="3" height="7.6" stroke="#3a4250" stroke-width="1"/><rect x="5.4" y="5.6" width="8" height="7.6" stroke="#3a4250" stroke-width="1"/></svg>
<span class="t " style="left:96.10px;top:441.45px;font-size:11px;line-height:11px;color:#363e4c;letter-spacing:-1.211px;">START</span>
<div class="b" style="left:346px;top:65px;width:1094px;height:1px;background:#e3e7ed;"></div>
<div class="b" style="left:358.5px;top:38.5px;width:105.5px;height:21px;background:#e9f2fb;border-radius:2px;"></div>
<span class="t " style="left:366.50px;top:44.17px;font-size:11.5px;line-height:11.5px;color:#1976c9;-webkit-text-stroke:0.2px currentColor;letter-spacing:0.091px;">Configuration</span>
<svg class="b" style="left:452.6px;top:41.4px;" width="9" height="9" viewBox="0 0 9 9" fill="none"><path d="M1.2 1.2l6.6 6.6M7.8 1.2l-6.6 6.6" stroke="#1976c9" stroke-width="1.1"/></svg>
<span class="t " style="left:357.00px;top:70.89px;font-size:11px;line-height:11px;color:#2b3240;-webkit-text-stroke:0.3px currentColor;letter-spacing:0.219px;">Home</span>
<div class="b" style="left:349.6px;top:86px;width:44.8px;height:2px;background:#1476c8;"></div>
<span class="t " style="left:405.50px;top:70.89px;font-size:11px;line-height:11px;color:#363e4c;letter-spacing:-0.105px;">Layout</span>
<span class="t " style="left:456.30px;top:70.89px;font-size:11px;line-height:11px;color:#363e4c;letter-spacing:0.025px;">Help</span>
<div class="b" style="left:346px;top:88px;width:1094px;height:34.6px;background:#f4f5f7;"></div>
<div class="b" style="left:346px;top:88px;width:1094px;height:1px;background:#e6e9ee;"></div>
<div class="b" style="left:346px;top:122px;width:1094px;height:1px;background:#e3e6eb;"></div>
<svg class="b" style="left:362.8px;top:99px;" width="13" height="14" viewBox="0 0 13 14" fill="none"><path d="M7.3 2.4a5.2 5.2 0 1 1 -1.9 0.05" stroke="#3a4352" stroke-width="1.2" stroke-linecap="round"/><path d="M4.4 0.6l2.5 1.7-2.3 1.9" fill="#3a4352" transform="rotate(20 5.8 2.3)"/></svg>
<span class="t " style="left:379.60px;top:100.09px;font-size:11px;line-height:11px;color:#455063;-webkit-text-stroke:0.3px currentColor;letter-spacing:0.072px;">Recalculate</span>
<div class="b" style="left:442.1px;top:96px;width:1px;height:18px;background:#e2e5ea;"></div>
<svg class="b" style="left:447.2px;top:104.4px;" width="6" height="3.8" viewBox="0 0 7 4.4" fill="none"><polyline points="0.7,0.7 3.5,3.5 6.3,0.7" stroke="#3a4352" stroke-width="1.4" stroke-linecap="round" stroke-linejoin="round"/></svg>
<div class="b" style="left:468.9px;top:92px;width:1px;height:26px;background:#e2e5ea;"></div>
<svg class="b" style="left:486px;top:97.4px;" width="12.4" height="15.4" viewBox="0 0 12.4 15.4" fill="none"><rect x="0.9" y="1.6" width="8.4" height="11.4" rx="1.6" stroke="#3a4352" stroke-width="1.1"/><path d="M3 1.6c0-1.3 4.2-1.3 4.2 0" stroke="#3a4352" stroke-width="1.1"/><rect x="4.6" y="5.6" width="7" height="9" rx="1.4" fill="#f4f5f7" stroke="#3a4352" stroke-width="1.1"/></svg>
<svg class="b" style="left:514.4px;top:99.2px;" width="12" height="13.2" viewBox="0 0 12 13.2" fill="none"><path d="M3 0.8l5.6 8M9 0.8l-5.6 8" stroke="#1f2633" stroke-width="1.6" stroke-linecap="round"/><circle cx="2.6" cy="10.5" r="1.5" stroke="#3a4352" stroke-width="1.1"/><circle cx="9.4" cy="10.5" r="1.5" stroke="#3a4352" stroke-width="1.1"/></svg>
<svg class="b" style="left:541.8px;top:98px;" width="13.4" height="14.4" viewBox="0 0 13.4 14.4" fill="none"><path d="M0.8 1.8a1 1 0 0 1 1-1h3.6l2.4 2.4v5.6a1 1 0 0 1-1 1h-5a1 1 0 0 1-1-1z" stroke="#3a4352" stroke-width="1.1" stroke-linejoin="round"/><path d="M5 5.4a1 1 0 0 1 1-1h3.4l2.4 2.4v5.8a1 1 0 0 1-1 1h-4.8a1 1 0 0 1-1-1z" fill="#f4f5f7" stroke="#3a4352" stroke-width="1.1" stroke-linejoin="round"/></svg>
<div class="b" style="left:568.3px;top:92px;width:1px;height:26px;background:#e2e5ea;"></div>
<svg class="b" style="left:584.4px;top:97.6px;" width="15" height="15.4" viewBox="0 0 15 15.4" fill="none"><path d="M3 11.4v1.6a1 1 0 0 0 1 1h8.4a1 1 0 0 0 1-1v-8.6l-3.2-3.4h-6.2a1 1 0 0 0-1 1v3" stroke="#3a4352" stroke-width="1.1" stroke-linejoin="round"/><path d="M10 1.2v3.4h3.2" stroke="#3a4352" stroke-width="0.9"/><rect x="0.7" y="5.4" width="10.4" height="6" rx="0.8" fill="#f4f5f7" stroke="#3a4352" stroke-width="1"/><text x="5.9" y="10.1" text-anchor="middle" font-family="Liberation Sans, sans-serif" font-size="4.2" font-weight="700" fill="#3a4352">XLS</text></svg>
<span class="t " style="left:602.60px;top:100.09px;font-size:11px;line-height:11px;color:#455063;-webkit-text-stroke:0.3px currentColor;letter-spacing:-0.214px;">XLSX Snapshot</span>
<svg class="b" style="left:692.4px;top:97.6px;" width="15" height="15.4" viewBox="0 0 15 15.4" fill="none"><path d="M3 11.4v1.6a1 1 0 0 0 1 1h8.4a1 1 0 0 0 1-1v-8.6l-3.2-3.4h-6.2a1 1 0 0 0-1 1v3" stroke="#3a4352" stroke-width="1.1" stroke-linejoin="round"/><path d="M10 1.2v3.4h3.2" stroke="#3a4352" stroke-width="0.9"/><rect x="0.7" y="5.4" width="10.4" height="6" rx="0.8" fill="#f4f5f7" stroke="#3a4352" stroke-width="1"/><text x="5.9" y="10.1" text-anchor="middle" font-family="Liberation Sans, sans-serif" font-size="4.2" font-weight="700" fill="#3a4352">XLS</text></svg>
<span class="t " style="left:710.60px;top:100.09px;font-size:11px;line-height:11px;color:#455063;-webkit-text-stroke:0.3px currentColor;letter-spacing:-0.269px;">XLSX OLAP Snapshot</span>
<svg class="b" style="left:831.8px;top:97.6px;" width="15" height="15.4" viewBox="0 0 15 15.4" fill="none"><path d="M3 11.4v1.6a1 1 0 0 0 1 1h8.4a1 1 0 0 0 1-1v-8.6l-3.2-3.4h-6.2a1 1 0 0 0-1 1v3" stroke="#3a4352" stroke-width="1.1" stroke-linejoin="round"/><path d="M10 1.2v3.4h3.2" stroke="#3a4352" stroke-width="0.9"/><rect x="0.7" y="5.4" width="10.4" height="6" rx="0.8" fill="#f4f5f7" stroke="#3a4352" stroke-width="1"/><text x="5.9" y="10.1" text-anchor="middle" font-family="Liberation Sans, sans-serif" font-size="4.2" font-weight="700" fill="#3a4352">PDF</text></svg>
<span class="t " style="left:852.70px;top:100.09px;font-size:11px;line-height:11px;color:#455063;-webkit-text-stroke:0.3px currentColor;letter-spacing:-1.450px;">PDF</span>
<svg class="b" style="left:890.4px;top:98px;" width="15" height="15" viewBox="0 0 15 15" fill="none"><circle cx="7.4" cy="7.4" r="6.4" stroke="#3a4352" stroke-width="1.1"/><ellipse cx="7.4" cy="7.4" rx="2.9" ry="6.4" stroke="#3a4352" stroke-width="1"/><path d="M1 7.4h12.8M2 4.2h10.8M2 10.6h10.8M7.4 1v12.8" stroke="#3a4352" stroke-width="0.9"/></svg>
<span class="t " style="left:908.60px;top:100.09px;font-size:11px;line-height:11px;color:#455063;-webkit-text-stroke:0.3px currentColor;letter-spacing:-0.415px;">HTML</span>
<div class="b" style="left:951.2px;top:92px;width:1px;height:26px;background:#e2e5ea;"></div>
<svg class="b" style="left:968.8px;top:100.2px;" width="13.4" height="11.4" viewBox="0 0 13.4 11.4" fill="none"><path d="M6.6 1.8a4 4 0 1 1 -0.9 7.6" stroke="#3a4352" stroke-width="1.2" stroke-linecap="round"/><path d="M7.4 0.5l-2 1.5 2.2 1.3" stroke="#3a4352" stroke-width="1.1" stroke-linecap="round" stroke-linejoin="round"/><circle cx="2.4" cy="8.4" r="1.9" fill="#1f2633"/></svg>
<span class="t " style="left:985.90px;top:100.09px;font-size:11px;line-height:11px;color:#455063;-webkit-text-stroke:0.3px currentColor;letter-spacing:0.112px;">Enable undo</span>
<div class="b" style="left:1053.1px;top:96px;width:1px;height:18px;background:#e2e5ea;"></div>
<svg class="b" style="left:1058.8px;top:104.4px;" width="6" height="3.8" viewBox="0 0 7 4.4" fill="none"><polyline points="0.7,0.7 3.5,3.5 6.3,0.7" stroke="#3a4352" stroke-width="1.4" stroke-linecap="round" stroke-linejoin="round"/></svg>
<div class="b" style="left:1080.5px;top:92px;width:1px;height:26px;background:#e2e5ea;"></div>
<span class="t " style="left:351.00px;top:129.62px;font-size:12.5px;line-height:12.5px;color:#2f3744;letter-spacing:0.304px;">Configuration</span>
<div class="b" style="left:346px;top:147px;width:1094px;height:1px;background:#e3e7ed;"></div>
<svg class="b" style="left:1385px;top:134px;" width="11" height="2" viewBox="0 0 11 2" fill="none"><line x1="0.6" y1="1" x2="10.4" y2="1" stroke="#5b6471" stroke-width="1.1"/></svg>
<svg class="b" style="left:1404px;top:129.6px;" width="12.4" height="12.4" viewBox="0 0 12.4 12.4" fill="none"><path d="M1 1l4.2 4.2M5.4 1.8v3.6h-3.6M11.4 11.4l-4.2-4.2M7 10.6v-3.6h3.6" stroke="#5b6471" stroke-width="1.1"/></svg>
<svg class="b" style="left:1424px;top:130.4px;" width="10.6" height="10.6" viewBox="0 0 10.6 10.6" fill="none"><path d="M0.8 0.8l9 9M9.8 0.8l-9 9" stroke="#5b6471" stroke-width="1.1"/></svg>
<div class="b" style="left:346px;top:211.7px;width:917px;height:546.8px;background:#f8f9fb;"></div>
<div class="b" style="left:346px;top:758.3px;width:649px;height:13.7px;background:#f2f3f6;"></div>
<span class="t " style="left:412.10px;top:166.85px;font-size:14px;line-height:14px;color:#353d4b;letter-spacing:0.143px;">Configuration</span>
<span class="t " style="left:412.10px;top:188.31px;font-size:10.5px;line-height:10.5px;color:#5f6875;letter-spacing:-0.214px;">Actual 2020-12_YTD •</span>
<svg class="b" style="left:364.8px;top:165.6px;" width="31" height="34" viewBox="0 0 31 34" fill="none"><polygon points="15.50,1.10 1.73,9.05 1.73,24.95 15.50,17.30" fill="#2b9ad9"/><polygon points="15.50,1.10 29.27,9.05 29.27,24.95 15.50,17.30" fill="#7dcbf1"/><polygon points="1.73,24.95 15.50,32.90 29.27,24.95 15.50,17.30" fill="#0d3e8f"/><polygon points="15.50,7.70 23.55,12.35 23.55,21.65 15.50,26.30 7.45,21.65 7.45,12.35" stroke="#ffffff" stroke-width="1.3" fill="none"/></svg>
<div class="b" style="left:359.6px;top:227px;width:881px;height:68.8px;background:#dfe2e7;"></div>
<div class="b" style="left:1240.6px;top:228.8px;width:8.8px;height:66px;background:#dfe2e7;"></div>
<span class="t " style="left:377.00px;top:250.26px;font-size:9.5px;line-height:9.5px;color:#222935;letter-spacing:-0.331px;">Version</span>
<div class="b" style="left:372.6px;top:263.8px;width:131.2px;height:18.6px;background:#fff;border:1px solid #cdd3da;border-radius:2px;"></div>
<span class="t " style="left:378.00px;top:269.86px;font-size:9.5px;line-height:9.5px;color:#222935;letter-spacing:-0.061px;">Actual</span>
<svg class="b" style="left:490px;top:271px;" width="6.6" height="4.2" viewBox="0 0 7 4.4" fill="none"><polyline points="0.7,0.7 3.5,3.5 6.3,0.7" stroke="#2b3240" stroke-width="1.3" stroke-linecap="round" stroke-linejoin="round"/></svg>
<span class="t " style="left:522.00px;top:250.26px;font-size:9.5px;line-height:9.5px;color:#222935;letter-spacing:0.053px;">Month YTD</span>
<div class="b" style="left:517.8px;top:263.8px;width:131.2px;height:18.6px;background:#fff;border:1px solid #cdd3da;border-radius:2px;"></div>
<span class="t " style="left:523.30px;top:269.86px;font-size:9.5px;line-height:9.5px;color:#222935;letter-spacing:-0.385px;">2020-12_YTD</span>
<svg class="b" style="left:635px;top:271px;" width="6.6" height="4.2" viewBox="0 0 7 4.4" fill="none"><polyline points="0.7,0.7 3.5,3.5 6.3,0.7" stroke="#2b3240" stroke-width="1.3" stroke-linecap="round" stroke-linejoin="round"/></svg>
<span class="t " style="left:1107.00px;top:252.36px;font-size:9.5px;line-height:9.5px;color:#222935;letter-spacing:-0.484px;">Scope</span>
<div class="b" style="left:1108.4px;top:263.8px;width:131.4px;height:18.6px;background:#fff;border:1px solid #cdd3da;border-radius:2px;"></div>
<span class="t " style="left:1113.80px;top:270.16px;font-size:9.5px;line-height:9.5px;color:#222935;letter-spacing:-0.232px;">All Scopes</span>
<svg class="b" style="left:1225.6px;top:271px;" width="6.6" height="4.2" viewBox="0 0 7 4.4" fill="none"><polyline points="0.7,0.7 3.5,3.5 6.3,0.7" stroke="#2b3240" stroke-width="1.3" stroke-linecap="round" stroke-linejoin="round"/></svg>
<span class="t " style="left:362.00px;top:317.65px;font-size:14px;line-height:14px;color:#394150;letter-spacing:-0.106px;">Configuration Screens</span>
<div class="b" style="left:362.8px;top:352px;width:174.8px;height:17px;background:#0b76ce;border-radius:1.5px;"></div>
<span class="t " style="left:396.00px;top:356.81px;font-size:10.5px;line-height:10.5px;color:#ffffff;">Scope of Consolidation</span>
<div class="b" style="left:361.8px;top:389.2px;width:175.8px;height:15.600000000000023px;background:#0b76ce;border-radius:1.5px;"></div>
<span class="t " style="left:414.00px;top:392.61px;font-size:10.5px;line-height:10.5px;color:#ffffff;letter-spacing:-0.404px;">Exchange Rates</span>
<div class="b" style="left:360px;top:426px;width:177.60000000000002px;height:16.600000000000023px;background:#0b76ce;border-radius:1.5px;"></div>
<span class="t " style="left:402.60px;top:429.91px;font-size:10.5px;line-height:10.5px;color:#ffffff;letter-spacing:-0.072px;">Consolidation Rules</span>
<div class="b" style="left:360px;top:462.8px;width:178.79999999999995px;height:16.69999999999999px;background:#0b76ce;border-radius:1.5px;"></div>
<span class="t " style="left:403.50px;top:466.41px;font-size:10.5px;line-height:10.5px;color:#ffffff;letter-spacing:-0.100px;">Cash Flow Mapping</span>
<div class="b" style="left:360.3px;top:500px;width:177.3px;height:15.200000000000045px;background:#0b76ce;border-radius:1.5px;"></div>
<span class="t " style="left:403.50px;top:503.41px;font-size:10.5px;line-height:10.5px;color:#ffffff;letter-spacing:-0.137px;">Investment Register</span>
<div class="b" style="left:355px;top:492px;width:189px;height:30.8px;border:3.6px solid #e81c24;"></div>
<span class="t " style="left:362.40px;top:538.75px;font-size:14px;line-height:14px;color:#394150;letter-spacing:0.099px;">Configuration Validation</span>
<div class="b" style="left:359.6px;top:572.4px;width:173.6px;height:70px;background:#ffffff;"></div>
<div class="b" style="left:537.7px;top:572.4px;width:421.8px;height:70px;background:#ffffff;"></div>
<div class="b" style="left:963.7px;top:572.4px;width:88px;height:70px;background:#ffffff;"></div>
<div class="b" style="left:1056.4px;top:572.4px;width:192.8px;height:70px;background:#ffffff;"></div>
<div class="b" style="left:359.6px;top:660px;width:173.6px;height:88px;background:#ffffff;"></div>
<div class="b" style="left:537.7px;top:660px;width:421.8px;height:88px;background:#ffffff;"></div>
<div class="b" style="left:963.7px;top:660px;width:88px;height:88px;background:#ffffff;"></div>
<div class="b" style="left:1056.4px;top:660px;width:192.8px;height:88px;background:#ffffff;"></div>
<span class="t " style="left:362.00px;top:576.89px;font-size:11px;line-height:11px;color:#1d2430;font-weight:700;letter-spacing:-0.903px;">Scope</span>
<span class="t " style="left:554.60px;top:576.89px;font-size:11px;line-height:11px;color:#1d2430;font-weight:700;letter-spacing:-0.225px;">Configuration</span>
<span class="t " style="left:573.50px;top:590.59px;font-size:11px;line-height:11px;color:#1d2430;font-weight:700;letter-spacing:-0.162px;">Validation</span>
<span class="t " style="left:579.00px;top:604.29px;font-size:11px;line-height:11px;color:#1d2430;font-weight:700;letter-spacing:-0.639px;">(Scope of</span>
<span class="t " style="left:552.00px;top:618.09px;font-size:11px;line-height:11px;color:#1d2430;font-weight:700;letter-spacing:-0.384px;">Consolidation)</span>
<span class="t " style="left:660.00px;top:576.89px;font-size:11px;line-height:11px;color:#1d2430;font-weight:700;letter-spacing:-0.225px;">Configuration</span>
<span class="t " style="left:678.90px;top:590.59px;font-size:11px;line-height:11px;color:#1d2430;font-weight:700;letter-spacing:-0.162px;">Validation</span>
<span class="t " style="left:653.00px;top:604.29px;font-size:11px;line-height:11px;color:#1d2430;font-weight:700;letter-spacing:-0.438px;">(Balance Sheet)</span>
<span class="t " style="left:764.90px;top:576.89px;font-size:11px;line-height:11px;color:#1d2430;font-weight:700;letter-spacing:-0.225px;">Configuration</span>
<span class="t " style="left:783.80px;top:590.59px;font-size:11px;line-height:11px;color:#1d2430;font-weight:700;letter-spacing:-0.162px;">Validation</span>
<span class="t " style="left:754.00px;top:604.29px;font-size:11px;line-height:11px;color:#1d2430;font-weight:700;letter-spacing:-0.443px;">(Profit and Loss)</span>
<span class="t " style="left:871.00px;top:576.89px;font-size:11px;line-height:11px;color:#1d2430;font-weight:700;letter-spacing:-0.225px;">Configuration</span>
<span class="t " style="left:889.90px;top:590.59px;font-size:11px;line-height:11px;color:#1d2430;font-weight:700;letter-spacing:-0.162px;">Validation</span>
<span class="t " style="left:867.90px;top:604.29px;font-size:11px;line-height:11px;color:#1d2430;font-weight:700;letter-spacing:-0.490px;">(Balance Sheet</span>
<span class="t " style="left:884.80px;top:618.09px;font-size:11px;line-height:11px;color:#1d2430;font-weight:700;letter-spacing:-0.205px;">(Segment))</span>
<span class="t " style="left:980.60px;top:576.89px;font-size:11px;line-height:11px;color:#1d2430;font-weight:700;letter-spacing:-0.225px;">Configuration</span>
<span class="t " style="left:1000.40px;top:590.59px;font-size:11px;line-height:11px;color:#1d2430;font-weight:700;letter-spacing:-0.262px;">Validation</span>
<span class="t " style="left:1059.00px;top:576.89px;font-size:11px;line-height:11px;color:#1d2430;font-weight:700;letter-spacing:-0.114px;">Workflow</span>
<span class="t " style="left:362.00px;top:670.24px;font-size:12px;line-height:12px;color:#1d2430;letter-spacing:-0.203px;">Total Group</span>
<span class="t " style="left:362.00px;top:692.34px;font-size:12px;line-height:12px;color:#1d2430;letter-spacing:-0.214px;">Subgroup Americas</span>
<span class="t " style="left:362.00px;top:713.74px;font-size:12px;line-height:12px;color:#1d2430;letter-spacing:-0.214px;">Subgroup European Union</span>
<span class="t " style="left:362.00px;top:734.99px;font-size:11px;line-height:11px;color:#1d2430;font-weight:700;letter-spacing:-0.638px;">All Scopes</span>
<svg class="b" style="left:610.2px;top:667px;" width="14" height="14" viewBox="0 0 14 14" fill="none"><circle cx="7" cy="7" r="6.1" stroke="#2a2f38" stroke-width="1.1"/><polyline points="3.9,7.3 6.2,9.5 10.3,4.8" stroke="#2a2f38" stroke-width="1.15"/></svg>
<svg class="b" style="left:610.2px;top:689.2px;" width="14" height="14" viewBox="0 0 14 14" fill="none"><circle cx="7" cy="7" r="6.1" stroke="#2a2f38" stroke-width="1.1"/><polyline points="3.9,7.3 6.2,9.5 10.3,4.8" stroke="#2a2f38" stroke-width="1.15"/></svg>
<svg class="b" style="left:610.2px;top:711px;" width="14" height="14" viewBox="0 0 14 14" fill="none"><circle cx="7" cy="7" r="6.1" stroke="#2a2f38" stroke-width="1.1"/><polyline points="3.9,7.3 6.2,9.5 10.3,4.8" stroke="#2a2f38" stroke-width="1.15"/></svg>
<svg class="b" style="left:610.2px;top:733.2px;" width="14" height="14" viewBox="0 0 14 14" fill="none"><circle cx="7" cy="7" r="6.1" stroke="#2a2f38" stroke-width="1.1"/><polyline points="3.9,7.3 6.2,9.5 10.3,4.8" stroke="#2a2f38" stroke-width="1.15"/></svg>
<svg class="b" style="left:715.7px;top:667px;" width="14" height="14" viewBox="0 0 14 14" fill="none"><circle cx="7" cy="7" r="6.1" stroke="#2a2f38" stroke-width="1.1"/><polyline points="3.9,7.3 6.2,9.5 10.3,4.8" stroke="#2a2f38" stroke-width="1.15"/></svg>
<svg class="b" style="left:715.7px;top:689.2px;" width="14" height="14" viewBox="0 0 14 14" fill="none"><circle cx="7" cy="7" r="6.1" stroke="#2a2f38" stroke-width="1.1"/><polyline points="3.9,7.3 6.2,9.5 10.3,4.8" stroke="#2a2f38" stroke-width="1.15"/></svg>
<svg class="b" style="left:715.7px;top:711px;" width="14" height="14" viewBox="0 0 14 14" fill="none"><circle cx="7" cy="7" r="6.1" stroke="#2a2f38" stroke-width="1.1"/><polyline points="3.9,7.3 6.2,9.5 10.3,4.8" stroke="#2a2f38" stroke-width="1.15"/></svg>
<svg class="b" style="left:715.7px;top:733.2px;" width="14" height="14" viewBox="0 0 14 14" fill="none"><circle cx="7" cy="7" r="6.1" stroke="#2a2f38" stroke-width="1.1"/><polyline points="3.9,7.3 6.2,9.5 10.3,4.8" stroke="#2a2f38" stroke-width="1.15"/></svg>
<svg class="b" style="left:821px;top:667px;" width="14" height="14" viewBox="0 0 14 14" fill="none"><circle cx="7" cy="7" r="6.1" stroke="#2a2f38" stroke-width="1.1"/><polyline points="3.9,7.3 6.2,9.5 10.3,4.8" stroke="#2a2f38" stroke-width="1.15"/></svg>
<svg class="b" style="left:821px;top:689.2px;" width="14" height="14" viewBox="0 0 14 14" fill="none"><circle cx="7" cy="7" r="6.1" stroke="#2a2f38" stroke-width="1.1"/><polyline points="3.9,7.3 6.2,9.5 10.3,4.8" stroke="#2a2f38" stroke-width="1.15"/></svg>
<svg class="b" style="left:821px;top:711px;" width="14" height="14" viewBox="0 0 14 14" fill="none"><circle cx="7" cy="7" r="6.1" stroke="#2a2f38" stroke-width="1.1"/><polyline points="3.9,7.3 6.2,9.5 10.3,4.8" stroke="#2a2f38" stroke-width="1.15"/></svg>
<svg class="b" style="left:821px;top:733.2px;" width="14" height="14" viewBox="0 0 14 14" fill="none"><circle cx="7" cy="7" r="6.1" stroke="#2a2f38" stroke-width="1.1"/><polyline points="3.9,7.3 6.2,9.5 10.3,4.8" stroke="#2a2f38" stroke-width="1.15"/></svg>
<svg class="b" style="left:926.4px;top:667px;" width="14" height="14" viewBox="0 0 14 14" fill="none"><circle cx="7" cy="7" r="6.1" stroke="#2a2f38" stroke-width="1.1"/><polyline points="3.9,7.3 6.2,9.5 10.3,4.8" stroke="#2a2f38" stroke-width="1.15"/></svg>
<svg class="b" style="left:926.4px;top:689.2px;" width="14" height="14" viewBox="0 0 14 14" fill="none"><circle cx="7" cy="7" r="6.1" stroke="#2a2f38" stroke-width="1.1"/><polyline points="3.9,7.3 6.2,9.5 10.3,4.8" stroke="#2a2f38" stroke-width="1.15"/></svg>
<svg class="b" style="left:926.4px;top:711px;" width="14" height="14" viewBox="0 0 14 14" fill="none"><circle cx="7" cy="7" r="6.1" stroke="#2a2f38" stroke-width="1.1"/><polyline points="3.9,7.3 6.2,9.5 10.3,4.8" stroke="#2a2f38" stroke-width="1.15"/></svg>
<svg class="b" style="left:926.4px;top:733.2px;" width="14" height="14" viewBox="0 0 14 14" fill="none"><circle cx="7" cy="7" r="6.1" stroke="#2a2f38" stroke-width="1.1"/><polyline points="3.9,7.3 6.2,9.5 10.3,4.8" stroke="#2a2f38" stroke-width="1.15"/></svg>
<svg class="b" style="left:1036px;top:667px;" width="14" height="14" viewBox="0 0 14 14" fill="none"><circle cx="7" cy="7" r="6.1" stroke="#2a2f38" stroke-width="1.1"/><polyline points="3.9,7.3 6.2,9.5 10.3,4.8" stroke="#2a2f38" stroke-width="1.15"/></svg>
<svg class="b" style="left:1036px;top:689.2px;" width="14" height="14" viewBox="0 0 14 14" fill="none"><circle cx="7" cy="7" r="6.1" stroke="#2a2f38" stroke-width="1.1"/><polyline points="3.9,7.3 6.2,9.5 10.3,4.8" stroke="#2a2f38" stroke-width="1.15"/></svg>
<svg class="b" style="left:1036px;top:711px;" width="14" height="14" viewBox="0 0 14 14" fill="none"><circle cx="7" cy="7" r="6.1" stroke="#2a2f38" stroke-width="1.1"/><polyline points="3.9,7.3 6.2,9.5 10.3,4.8" stroke="#2a2f38" stroke-width="1.15"/></svg>
<svg class="b" style="left:1036px;top:733.2px;" width="14" height="14" viewBox="0 0 14 14" fill="none"><circle cx="7" cy="7" r="6.1" stroke="#2a2f38" stroke-width="1.1"/><polyline points="3.9,7.3 6.2,9.5 10.3,4.8" stroke="#2a2f38" stroke-width="1.15"/></svg>
<span class="t " style="left:1059.00px;top:670.24px;font-size:12px;line-height:12px;color:#1d2430;letter-spacing:-0.328px;width:172.8px;overflow:hidden;">Separate Financial Statement Collection</span>
<span class="t " style="left:1058.60px;top:692.34px;font-size:12px;line-height:12px;color:#1d2430;letter-spacing:-0.048px;">Configuration</span>
<span class="t " style="left:1058.60px;top:713.74px;font-size:12px;line-height:12px;color:#1d2430;letter-spacing:-0.048px;">Configuration</span>
<svg class="b" style="left:1236.4px;top:670.2px;" width="10" height="8" viewBox="0 0 10 8" fill="none"><path d="M0.6 4h8M5.4 0.8l3.4 3.2-3.4 3.2" stroke="#1a7fd4" stroke-width="1.2"/></svg>
<svg class="b" style="left:1236.4px;top:692px;" width="10" height="8" viewBox="0 0 10 8" fill="none"><path d="M0.6 4h8M5.4 0.8l3.4 3.2-3.4 3.2" stroke="#1a7fd4" stroke-width="1.2"/></svg>
<svg class="b" style="left:1236.4px;top:714px;" width="10" height="8" viewBox="0 0 10 8" fill="none"><path d="M0.6 4h8M5.4 0.8l3.4 3.2-3.4 3.2" stroke="#1a7fd4" stroke-width="1.2"/></svg>
<div class="b" style="left:359.6px;top:726.4px;width:889.6px;height:1px;background:#c4c7cb;"></div>
<div class="b" style="left:359.6px;top:726.4px;width:173.6px;height:1px;background:#353a42;"></div>
<div class="b" style="left:537.7px;top:726.4px;width:421.8px;height:1px;background:#353a42;"></div>
<div class="b" style="left:963.7px;top:726.4px;width:88px;height:1px;background:#353a42;"></div>
<div class="b" style="left:1056.4px;top:726.4px;width:192.8px;height:1px;background:#353a42;"></div>
<div class="b" style="left:1426.6px;top:148px;width:13.4px;height:610.4px;background:linear-gradient(90deg,#f1f1f1,#fbfbfb);border-left:1px solid #e6e6e6"></div>
<div class="b" style="left:1427px;top:149.5px;width:13px;height:12.7px;background:#fff;border:1px solid #c2c2c2;"></div>
<svg class="b" style="left:1430.2px;top:153.2px;" width="6.6" height="4.6" viewBox="0 0 6.6 4.6" fill="none"><polyline points="0.8,3.6 3.3,1.1 5.8,3.6" stroke="#505050" stroke-width="1.2"/></svg>
<div class="b" style="left:1427px;top:164.4px;width:13px;height:388.4px;background:#f0f0f0;border:1px solid #b9b9b9;"></div>
<div class="b" style="left:1431.4px;top:356.4px;width:4px;height:1px;background:#9a9a9a;"></div>
<div class="b" style="left:1431.4px;top:358.4px;width:4px;height:1px;background:#9a9a9a;"></div>
<div class="b" style="left:1431.4px;top:360.4px;width:4px;height:1px;background:#9a9a9a;"></div>
<div class="b" style="left:1427px;top:745px;width:13px;height:12.8px;background:#fff;border:1px solid #c2c2c2;"></div>
<svg class="b" style="left:1430.2px;top:749px;" width="6.6" height="4.6" viewBox="0 0 6.6 4.6" fill="none"><polyline points="0.8,1 3.3,3.5 5.8,1" stroke="#505050" stroke-width="1.2"/></svg>
<div class="b" style="left:995px;top:759px;width:432px;height:13px;background:#ffffff;"></div>
<div class="b" style="left:1011px;top:759px;width:416px;height:1px;background:#e2e2e2;"></div>
<div class="b" style="left:996px;top:760px;width:13.6px;height:13px;background:#fff;border:1px solid #c2c2c2;"></div>
<svg class="b" style="left:1000.4px;top:763.2px;" width="4.6" height="6.6" viewBox="0 0 4.6 6.6" fill="none"><polyline points="3.6,0.8 1.1,3.3 3.6,5.8" stroke="#505050" stroke-width="1.2"/></svg>
<div class="b" style="left:1011px;top:760px;width:262.4px;height:13px;background:#f0f0f0;border:1px solid #b9b9b9;"></div>
<div class="b" style="left:1140px;top:764.4px;width:1px;height:4px;background:#9a9a9a;"></div>
<div class="b" style="left:1142px;top:764.4px;width:1px;height:4px;background:#9a9a9a;"></div>
<div class="b" style="left:1144px;top:764.4px;width:1px;height:4px;background:#9a9a9a;"></div>
<div class="b" style="left:1413px;top:760px;width:12.8px;height:13px;background:#fff;border:1px solid #c2c2c2;"></div>
<svg class="b" style="left:1417.2px;top:763.2px;" width="4.6" height="6.6" viewBox="0 0 4.6 6.6" fill="none"><polyline points="1,0.8 3.5,3.3 1,5.8" stroke="#505050" stroke-width="1.2"/></svg>
<div class="b" style="left:1427px;top:758.4px;width:13px;height:13.6px;background:#f3f4f6;"></div>
<div class="b" style="left:0px;top:0px;width:1440px;height:0.9px;background:#d2d2d2;"></div>
</body></html>
